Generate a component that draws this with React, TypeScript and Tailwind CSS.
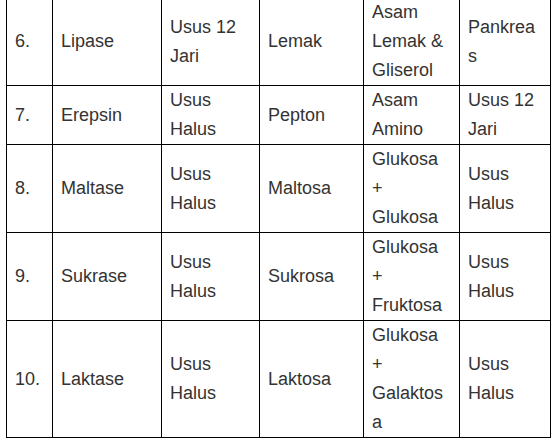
import React from "react";

const rows: string[][] = [
  ["6.", "Lipase", "Usus 12 Jari", "Lemak", "Asam Lemak & Gliserol", "Pankreas"],
  ["7.", "Erepsin", "Usus Halus", "Pepton", "Asam Amino", "Usus 12 Jari"],
  ["8.", "Maltase", "Usus Halus", "Maltosa", "Glukosa + Glukosa", "Usus Halus"],
  ["9.", "Sukrase", "Usus Halus", "Sukrosa", "Glukosa + Fruktosa", "Usus Halus"],
  ["10.", "Laktase", "Usus Halus", "Laktosa", "Glukosa + Galaktosa", "Usus Halus"],
];

export default function App() {
  return (
    <div className="w-[559px] h-[446px] overflow-hidden bg-white">
      <div
        className="ml-[6px] mt-[-2px] w-[545px] grid grid-cols-[46px_109px_98px_104px_96px_91px] border-l border-black text-[18px] leading-[29px] text-[#333333]"
        style={{ fontFamily: '"Liberation Sans", Arial, sans-serif' }}
      >
        {rows.map((r, i) =>
          r.map((c, j) => (
            <div
              key={`${i}-${j}`}
              className="flex flex-col justify-center border-r border-b border-black px-[8px] [overflow-wrap:anywhere]"
            >
              <span>{c}</span>
            </div>
          ))
        )}
      </div>
    </div>
  );
}
